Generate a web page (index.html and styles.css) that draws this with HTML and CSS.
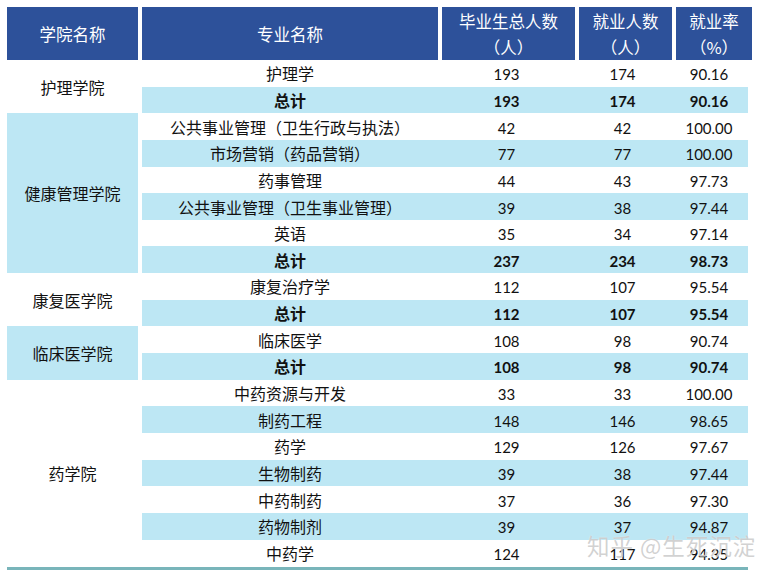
FILE: index.html
```html
<!DOCTYPE html>
<html lang="zh-CN">
<head>
<meta charset="utf-8">
<title>就业率</title>
<link rel="stylesheet" href="styles.css">
</head>
<body>
<div class="sheet">
  <div class="head">
    <div class="hc">学院名称</div>
    <div class="hc">专业名称</div>
    <div class="hc two">毕业生总人数<br>（人）</div>
    <div class="hc two">就业人数<br>（人）</div>
    <div class="hc two">就业率<br>（%）</div>
  </div>

  <div class="group">
    <div class="college">护理学院</div>
    <div class="rows">
      <div class="row"><div class="m">护理学</div><div class="n">193</div><div class="n">174</div><div class="n">90.16</div></div>
      <div class="row alt total"><div class="m">总计</div><div class="n">193</div><div class="n">174</div><div class="n">90.16</div></div>
    </div>
  </div>

  <div class="group">
    <div class="college alt">健康管理学院</div>
    <div class="rows">
      <div class="row"><div class="m">公共事业管理（卫生行政与执法）</div><div class="n">42</div><div class="n">42</div><div class="n">100.00</div></div>
      <div class="row alt"><div class="m">市场营销（药品营销）</div><div class="n">77</div><div class="n">77</div><div class="n">100.00</div></div>
      <div class="row"><div class="m">药事管理</div><div class="n">44</div><div class="n">43</div><div class="n">97.73</div></div>
      <div class="row alt"><div class="m">公共事业管理（卫生事业管理）</div><div class="n">39</div><div class="n">38</div><div class="n">97.44</div></div>
      <div class="row"><div class="m">英语</div><div class="n">35</div><div class="n">34</div><div class="n">97.14</div></div>
      <div class="row alt total"><div class="m">总计</div><div class="n">237</div><div class="n">234</div><div class="n">98.73</div></div>
    </div>
  </div>

  <div class="group">
    <div class="college">康复医学院</div>
    <div class="rows">
      <div class="row"><div class="m">康复治疗学</div><div class="n">112</div><div class="n">107</div><div class="n">95.54</div></div>
      <div class="row alt total"><div class="m">总计</div><div class="n">112</div><div class="n">107</div><div class="n">95.54</div></div>
    </div>
  </div>

  <div class="group">
    <div class="college alt">临床医学院</div>
    <div class="rows">
      <div class="row"><div class="m">临床医学</div><div class="n">108</div><div class="n">98</div><div class="n">90.74</div></div>
      <div class="row alt total"><div class="m">总计</div><div class="n">108</div><div class="n">98</div><div class="n">90.74</div></div>
    </div>
  </div>

  <div class="group">
    <div class="college">药学院</div>
    <div class="rows">
      <div class="row"><div class="m">中药资源与开发</div><div class="n">33</div><div class="n">33</div><div class="n">100.00</div></div>
      <div class="row alt"><div class="m">制药工程</div><div class="n">148</div><div class="n">146</div><div class="n">98.65</div></div>
      <div class="row"><div class="m">药学</div><div class="n">129</div><div class="n">126</div><div class="n">97.67</div></div>
      <div class="row alt"><div class="m">生物制药</div><div class="n">39</div><div class="n">38</div><div class="n">97.44</div></div>
      <div class="row"><div class="m">中药制药</div><div class="n">37</div><div class="n">36</div><div class="n">97.30</div></div>
      <div class="row alt"><div class="m">药物制剂</div><div class="n">39</div><div class="n">37</div><div class="n">94.87</div></div>
      <div class="row"><div class="m">中药学</div><div class="n">124</div><div class="n">117</div><div class="n">94.35</div></div>
    </div>
  </div>
  <div class="rule"></div>
  <div class="watermark">知乎 @生死沉淀</div>
</div>
</body>
</html>
```

FILE: styles.css
```css
html, body {
  margin: 0;
  padding: 0;
  background: #ffffff;
}
body {
  font-family: "Noto Sans CJK SC", "Noto Sans", sans-serif;
  color: #111111;
}
.sheet {
  position: relative;
  width: 741px;
  margin: 7px 0 0 7px;
}
.head {
  display: grid;
  grid-template-columns: 131px 296px 133px 93px 76px;
  column-gap: 4px;
  height: 53px;
}
.hc {
  background: #2D519A;
  color: #ffffff;
  font-size: 16.5px;
  display: flex;
  align-items: center;
  justify-content: center;
  text-align: center;
  line-height: 26px;
}
.group {
  display: flex;
  gap: 4px;
}
.college {
  width: 131px;
  flex: none;
  display: flex;
  align-items: center;
  justify-content: center;
  font-size: 16px;
}
.alt {
  background: #BDE7F4;
}
.rows {
  flex: 1;
  display: flex;
  flex-direction: column;
}
.row {
  display: grid;
  grid-template-columns: 296px 137px 95px 78px;
  height: 26.65px;
  align-items: center;
}
.m {
  text-align: center;
  font-size: 16px;
  line-height: 20px;
}
.n {
  text-align: center;
  font-family: Lato, "Liberation Sans", sans-serif;
  font-size: 15px;
  line-height: 20px;
  padding-top: 2px;
}
.total .m, .total .n {
  font-weight: 700;
}
.rule {
  height: 2.5px;
  background: #79B5BA;
  margin-top: 1px;
}
.watermark {
  position: absolute;
  left: 580px;
  top: 522px;
  font-size: 22.5px;
  letter-spacing: 1px;
  color: rgba(165, 165, 165, 0.5);
  text-shadow: 0 0 1px rgba(255,255,255,0.9);
  white-space: nowrap;
  pointer-events: none;
  font-family: "Noto Sans CJK SC", sans-serif;
}
```
